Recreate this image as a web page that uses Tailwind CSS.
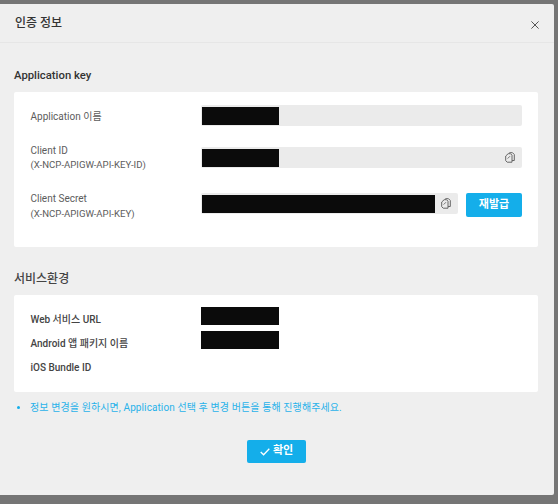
<!DOCTYPE html>
<html lang="en">
<head>
    <meta charset="UTF-8">
    <meta name="viewport" content="width=device-width, initial-scale=1.0">
    <title>인증 정보</title>
    <script src="https://cdn.jsdelivr.net/npm/@tailwindcss/browser@4"></script>
</head>
<body class="bg-[#757575] h-[504px] w-[558px] overflow-hidden font-['Roboto','Noto_Sans_CJK_KR',sans-serif] text-[10px] text-[#5c5c5c]">
    <div class="mt-[4px] w-[554px] h-[491px] bg-[#efefef] rounded-r-[2px] flex flex-col">
        <!-- header -->
        <div class="h-[39px] shrink-0 border-b border-[#e6e6e6] pl-[15px] pr-[15px] flex items-center justify-between">
            <h1 class="text-[12px] font-medium text-[#333]">인증 정보</h1>
            <svg class="mt-[4px]" width="8" height="8" viewBox="0 0 8 8" fill="none" stroke="#555" stroke-width="1"><path d="M0.4 0.4L7.6 7.6M7.6 0.4L0.4 7.6"/></svg>
        </div>

        <div class="pl-[14px] pr-[16px] flex flex-col">
            <h2 class="mt-[25px] h-[15px] leading-[15px] text-[11.3px] font-medium text-[#333]">Application key</h2>

            <div class="mt-[9px] h-[155px] bg-white rounded-[2px] pt-[13px] pl-[16.5px] pr-[16px]">
                <div class="flex items-center h-[21px]">
                    <div class="w-[170.5px] pt-[2px]">Application 이름</div>
                    <div class="flex-1 h-[21px] bg-[#ebebeb] rounded-[2px] pl-px flex items-center">
                        <div class="w-[77px] h-[18px] bg-[#0b0b0b]"></div>
                    </div>
                </div>
                <div class="flex items-center h-[21px] mt-[21px]">
                    <div class="w-[170.5px] leading-[14.5px] pt-[1px]">Client ID<br><span class="text-[9.6px]">(X-NCP-APIGW-API-KEY-ID)</span></div>
                    <div class="flex-1 h-[21px] bg-[#ebebeb] rounded-[2px] pl-px pr-[7px] flex items-center justify-between">
                        <div class="w-[77px] h-[18px] bg-[#0b0b0b]"></div>
                        <svg width="10" height="11" viewBox="0 0 10 11" fill="#ebebeb" stroke="#666" stroke-width="1"><path d="M4 1.2Q4.2 .7 5 .7H7.5L9.3 2.5V8.5H6.5"/><path d="M.7 4L3.2 1.7H5.5L7 3.2V10.2H2.2L.7 8.7Z"/><path d="M2.6 6.6L5 4.2" stroke-width=".9"/></svg>
                    </div>
                </div>
                <div class="flex items-start mt-[25px]">
                    <div class="w-[170.5px] leading-[14.5px] -mt-[1px]">Client Secret<br><span class="text-[9.6px]">(X-NCP-APIGW-API-KEY)</span></div>
                    <div class="w-[257px] h-[21px] bg-[#ebebeb] rounded-[2px] pl-px pr-[7px] flex items-center justify-between">
                        <div class="w-[233px] h-[18px] bg-[#0b0b0b]"></div>
                        <svg width="10" height="11" viewBox="0 0 10 11" fill="#ebebeb" stroke="#666" stroke-width="1"><path d="M4 1.2Q4.2 .7 5 .7H7.5L9.3 2.5V8.5H6.5"/><path d="M.7 4L3.2 1.7H5.5L7 3.2V10.2H2.2L.7 8.7Z"/><path d="M2.6 6.6L5 4.2" stroke-width=".9"/></svg>
                    </div>
                    <button class="ml-[8px] w-[56px] h-[24px] bg-[#14aeea] rounded-[2px] text-white text-[11px] font-bold">재발급</button>
                </div>
            </div>

            <h2 class="mt-[25px] h-[15px] leading-[15px] text-[12px] font-medium text-[#444]">서비스환경</h2>

            <div class="mt-[8px] h-[97px] bg-white rounded-[2px] pt-[12px] pl-[16.5px] font-medium text-[#444]">
                <div class="flex items-start h-[24px]">
                    <div class="w-[170.5px] pt-[5px]">Web 서비스 URL</div>
                    <div class="w-[78px] h-[18px] bg-[#0b0b0b]"></div>
                </div>
                <div class="flex items-start h-[24px]">
                    <div class="w-[170.5px] pt-[5px]">Android 앱 패키지 이름</div>
                    <div class="w-[78px] h-[18px] bg-[#0b0b0b]"></div>
                </div>
                <div class="pt-[5px]">iOS Bundle ID</div>
            </div>

            <div class="mt-[8px] flex items-center pl-[3px] text-[#29b2ea] h-[15px]">
                <span class="w-[3px] h-[3px] rounded-full bg-[#14aeea] mr-[10px]"></span>
                <span class="tracking-[0.1px]">정보 변경을 원하시면, Application 선택 후 변경 버튼을 통해 진행해주세요.</span>
            </div>

            <button class="mt-[25px] self-center ml-[1px] w-[59px] h-[23px] bg-[#14aeea] rounded-[2px] text-white text-[11px] font-bold flex items-center justify-center gap-[3px]">
                <svg width="10" height="8" viewBox="0 0 10 8" fill="none" stroke="white" stroke-width="1.3"><path d="M.7 4L3.6 6.8L9.3 .8"/></svg>
                확인
            </button>
        </div>
    </div>
</body>
</html>
